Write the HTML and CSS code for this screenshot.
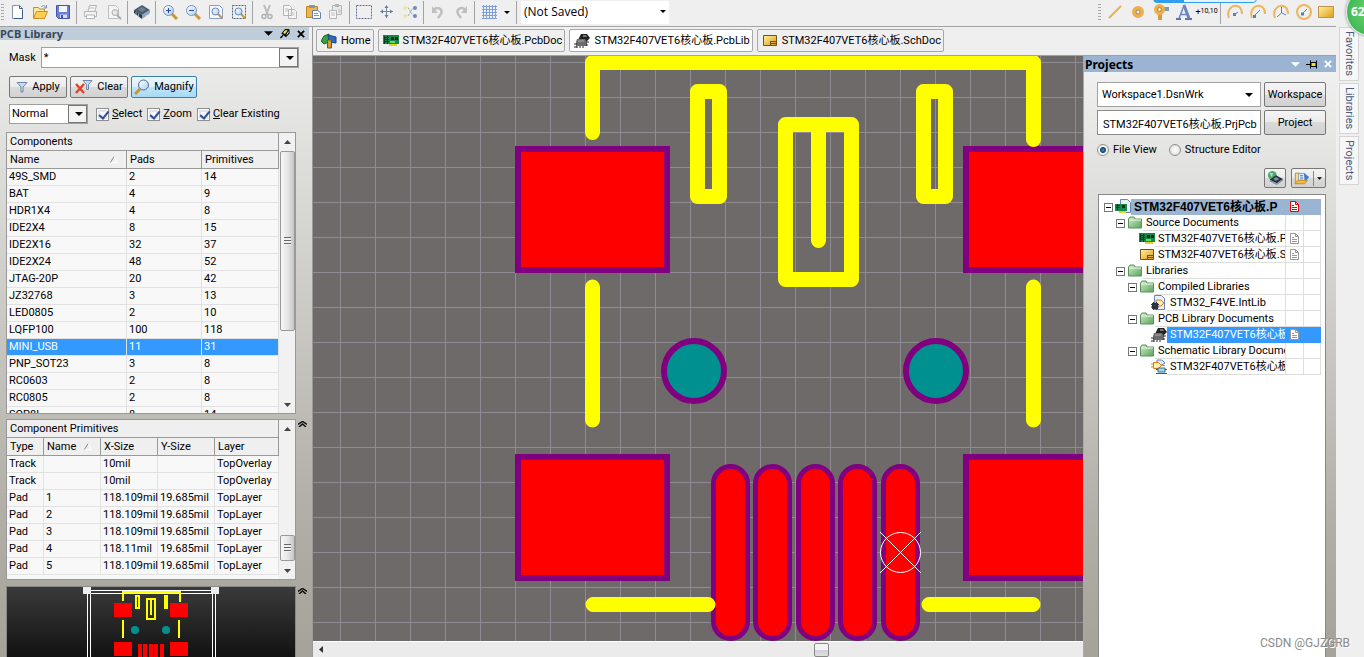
FILE: index.html
```
<!DOCTYPE html>
<html lang="zh-CN">
<head>
    <meta charset="UTF-8">
    <meta name="viewport" content="width=device-width, initial-scale=1.0">
    <title>PCB Library</title>
    <link rel="stylesheet" href="styles.css">
</head>
<body>
    <!-- shared icons -->
    <svg class="defs" width="0" height="0">
        <defs>
            <linearGradient id="gold" x1="0" y1="0" x2="1" y2="1"><stop offset="0" stop-color="#fff3a0"/><stop offset="1" stop-color="#dd9a18"/></linearGradient>
            <linearGradient id="leaf" x1="0" y1="0" x2="1" y2="1"><stop offset="0" stop-color="#d4ecc8"/><stop offset="1" stop-color="#5aa45e"/></linearGradient>
            <linearGradient id="glass" x1="0" y1="0" x2="1" y2="1"><stop offset="0" stop-color="#ffffff"/><stop offset="1" stop-color="#a9d0f2"/></linearGradient>
            <symbol id="i-new" viewBox="0 0 16 16"><path d="M3.500 1.500h7l3 3v10h-10z" fill="#fff" stroke="#8496b0"/><path d="M10.500 1.500v3h3M5 14.500h8.500V6" fill="none" stroke="#3c5a8c"/></symbol>
            <symbol id="i-open" viewBox="0 0 16 16"><path d="M1.500 14V3.500h5l1 1.500h5v3" fill="#ffe79a" stroke="#c09030"/><path d="M1.500 14.500l3-7h11l-3 7z" fill="#ffce55" stroke="#c98f25"/><path d="M9 3c2-2 4-1.500 5 .5M14.500 1v3h-3" fill="none" stroke="#7c8fb0"/></symbol>
            <symbol id="i-save" viewBox="0 0 16 16"><path d="M1.500 1.500h13v13h-11l-2-2z" fill="#6c7fdc" stroke="#4454b0"/><path d="M4 2h8v6H4z" fill="#f4f6ff"/><path d="M5 10.500h7V14H5z" fill="#d6dcf2"/><path d="M6 11h2v3H6z" fill="#4454b0"/></symbol>
            <symbol id="i-print" viewBox="0 0 16 16"><path d="M5 7l1.500-5.500h7L12 7M1.500 7.500h12v5h-12z" fill="#f2f2f2" stroke="#b5b5b5"/><path d="M3.500 11h8v3.500h-8z" fill="#fff" stroke="#b5b5b5"/><path d="M6 4h5" stroke="#c8c8c8"/></symbol>
            <symbol id="i-preview" viewBox="0 0 16 16"><path d="M2.500 1.500h7l3 3v10h-10z" fill="#f6f6f6" stroke="#bdbdbd"/><circle cx="9" cy="8.500" r="3" fill="#e6e6e6" stroke="#adadad"/><path d="M11 11l4 4" stroke="#adadad" stroke-width="2"/></symbol>
            <symbol id="i-chip" viewBox="0 0 16 16"><path d="M8 1l8 5-8 5-8-5z" fill="#4c5d72"/><path d="M0 6l8 5v4L0 9z" fill="#2a3644"/><path d="M16 6l-8 5v4l8-6z" fill="#8aa4bd"/><path d="M2 8v3M4.500 9.500v3M11.500 9.500v3M14 8v3" stroke="#9cb0c4"/><path d="M8 3l4 2.500L8 8 4 5.500z" fill="#6c8095"/></symbol>
            <symbol id="i-zoomin" viewBox="0 0 16 16"><path d="M10 10l5 5" stroke="#c99632" stroke-width="3"/><circle cx="6.500" cy="6.500" r="5" fill="url(#glass)" stroke="#7b93bd"/><path d="M4 6.500h5M6.500 4v5" stroke="#2b4a9c"/></symbol>
            <symbol id="i-zoomout" viewBox="0 0 16 16"><path d="M10 10l5 5" stroke="#c99632" stroke-width="3"/><circle cx="6.500" cy="6.500" r="5" fill="url(#glass)" stroke="#7b93bd"/><path d="M4 6.500h5" stroke="#2b4a9c"/></symbol>
            <symbol id="i-zoomdoc" viewBox="0 0 16 16"><path d="M1.500 1.500h10l3 3v10h-13z" fill="#f4f8ff" stroke="#8aa0c4"/><path d="M10 10l4 4" stroke="#c99632" stroke-width="2"/><circle cx="7.500" cy="7.500" r="3.500" fill="url(#glass)" stroke="#6a85b4"/></symbol>
            <symbol id="i-zoomsel" viewBox="0 0 16 16"><path d="M1.500 1.500h13v13h-13z" fill="none" stroke="#4e6288" stroke-dasharray="2 1"/><path d="M10 10l4 4" stroke="#c99632" stroke-width="2"/><circle cx="7.500" cy="7.500" r="3.500" fill="url(#glass)" stroke="#6a85b4"/></symbol>
            <symbol id="i-cut" viewBox="0 0 16 16"><path d="M5 1l4 10M11 1L7 11" stroke="#bcbcbc" stroke-width="2"/><circle cx="5" cy="12.500" r="2" fill="none" stroke="#b2b2b2" stroke-width="1.500"/><circle cx="11" cy="12.500" r="2" fill="none" stroke="#b2b2b2" stroke-width="1.500"/></symbol>
            <symbol id="i-copy" viewBox="0 0 16 16"><path d="M1.500 1.500h6l2 2v8h-8zM6.500 5.500h6l2 2v7h-8z" fill="#f6f6f6" stroke="#b5b5b5"/><path d="M3 5h3M3 7h3M8.500 9h4M8.500 11h4" stroke="#c0c0c0"/></symbol>
            <symbol id="i-paste" viewBox="0 0 16 16"><path d="M1.500 2.500h11v11h-11z" fill="#f0b64a" stroke="#bf8420"/><path d="M4 1h6v3H4z" fill="#8c94a4"/><path d="M7.500 6.500h5l3 2v6h-8z" fill="#fff" stroke="#6680b0"/><path d="M9 9.500h4M9 11.500h5" stroke="#7b93c4"/></symbol>
            <symbol id="i-clone" viewBox="0 0 16 16"><path d="M4.500 1.500h9v9h-9z" fill="#eaeaea" stroke="#b5b5b5"/><path d="M7 0h4v3H7z" fill="#b5b5b5"/><path d="M1.500 6.500h7v8h-7z" fill="#f6f6f6" stroke="#b5b5b5"/><path d="M3 9h4M3 11h4M10 6h3M10 8h3" stroke="#c0c0c0"/></symbol>
            <symbol id="i-marquee" viewBox="0 0 16 16"><path d="M.5 1.500h15v13H.5z" fill="none" stroke="#5d6f92" stroke-dasharray="2 1"/></symbol>
            <symbol id="i-move" viewBox="0 0 16 16"><path d="M7.500 2v12M2 7.500h12" stroke="#7388a8"/><path d="M7.500 1l2 3h-4zM7.500 14l2-3h-4zM1 7.500l3-2v4zM14 7.500l-3-2v4z" fill="#6a7f9f"/></symbol>
            <symbol id="i-cross" viewBox="0 0 16 16"><path d="M3 3.500h3l5 8h2M3 12h3l5-8h2" fill="none" stroke="#93a4c0" stroke-dasharray="2 1"/><circle cx="3" cy="4" r="2" fill="#f2e6a0"/><circle cx="3" cy="12" r="2" fill="#f2e6a0"/><circle cx="13" cy="4" r="2" fill="#6f89b8"/><circle cx="13" cy="12" r="2" fill="#6f89b8"/></symbol>
            <symbol id="i-undo" viewBox="0 0 16 16"><path d="M3 6c5-4 10-1 8 4l-3 4" fill="none" stroke="#c0c0c0" stroke-width="2.500"/><path d="M2 2v7h6z" fill="#c0c0c0"/></symbol>
            <symbol id="i-redo" viewBox="0 0 16 16"><path d="M13 6C8 2 3 5 5 10l3 4" fill="none" stroke="#c0c0c0" stroke-width="2.500"/><path d="M14 2v7H8z" fill="#c0c0c0"/></symbol>
            <symbol id="i-grid" viewBox="0 0 16 16"><path d="M2.500 1v14M5.500 1v14M8.500 1v14M11.500 1v14M14.500 1v14M1 2.500h15M1 5.500h15M1 8.500h15M1 11.500h15M1 14.500h15" stroke="#7d9fdc"/></symbol>
            <symbol id="i-line" viewBox="0 0 16 16"><path d="M2 14L14 2" stroke="#eab04c" stroke-width="2"/></symbol>
            <symbol id="i-pad" viewBox="0 0 16 16"><circle cx="8" cy="8" r="4" fill="#f0eef6" stroke="#eeb04c" stroke-width="4"/><circle cx="8" cy="8" r="2" fill="none" stroke="#a98850"/></symbol>
            <symbol id="i-via" viewBox="0 0 16 16"><path d="M8 3h8v4H8z" fill="#6f9fc0"/><path d="M5 8h4v8H5z" fill="#d59b40"/><circle cx="6.500" cy="5.500" r="3.500" fill="#f0eef6" stroke="#eeb04c" stroke-width="4"/><circle cx="6.500" cy="5.500" r="2" fill="none" stroke="#a98850"/></symbol>
            <symbol id="i-text" viewBox="0 0 16 16"><path d="M0 15h5M9 15h7" stroke="#5d75ad" stroke-width="2"/><path d="M3 14.500L8 1.500" stroke="#6d85bc" stroke-width="1.500"/><path d="M8 1l5 13.500" stroke="#6d85bc" stroke-width="3"/><path d="M5 10.500h6" stroke="#6d85bc" stroke-width="1.500"/></symbol>
            <symbol id="i-arc1" viewBox="0 0 16 16"><path d="M2 14C-1 6 5 1 10 2c4 1 5 4 5 8" fill="none" stroke="#edb55e" stroke-width="2"/><path d="M7 11l4-3" stroke="#5b7fb8"/><path d="M6 9h3v3H6z" fill="#5b7fb8"/></symbol>
            <symbol id="i-arc2" viewBox="0 0 16 16"><path d="M2 14C-1 6 5 1 10 2c4 1 5 4 5 8" fill="none" stroke="#edb55e" stroke-width="2"/><path d="M4 12l6-6" stroke="#5b7fb8"/><path d="M3 11h3v3H3z" fill="#5b7fb8"/></symbol>
            <symbol id="i-arc3" viewBox="0 0 16 16"><path d="M2 14C-1 6 5 1 10 2c4 1 5 4 5 8" fill="none" stroke="#edb55e" stroke-width="2"/><path d="M8.500 3v6L4 13M9 9l4 2" fill="none" stroke="#5b7fb8"/></symbol>
            <symbol id="i-ring" viewBox="0 0 16 16"><circle cx="8" cy="8" r="7" fill="none" stroke="#edb55e" stroke-width="2"/><path d="M6 10l5-5" stroke="#5b7fb8"/><path d="M5 8.500h3v3H5z" fill="#5b7fb8"/></symbol>
            <symbol id="i-fill" viewBox="0 0 16 16"><path d="M.5 2.500h15v11H.5z" fill="url(#gold)" stroke="#c4924c"/></symbol>
            <symbol id="i-home" viewBox="0 0 16 16"><path d="M0 8l3-5 5-2v8l-5 2z" fill="#35a045" stroke="#1d6a2a"/><path d="M7 2l8 2v6l-7-1z" fill="#2b6bc0" stroke="#174588"/><path d="M6.500 7h4v8h-4z" fill="#d69e2e" stroke="#7a5410"/></symbol>
            <symbol id="i-pcb" viewBox="0 0 16 16"><path d="M0 2h16v9H0z" fill="#16884a"/><path d="M1 4.500h5M1 6.500h5M1 8.500h5M1.500 3v8M4.500 3v8" stroke="#0b3f25"/><path d="M8 4h3v3H8zM12 4h3v3h-3z" fill="#0a2f1b"/><path d="M7 8h5v2H7z" fill="#5be06c"/><path d="M6 11h8v2H6z" fill="#e5d12a"/></symbol>
            <symbol id="i-lib" viewBox="0 0 16 16"><path d="M7 1l6 0 3 4-4 4-8-2z" fill="#222"/><path d="M9 2h3l1 2h-4z" fill="#777"/><path d="M3 6h8l2 3v4H2V9z" fill="#6c6c6c"/><path d="M3 13v2M6 13v2M9 13v2M0 11h3M0 14h3M12 9h3M12 12h2" stroke="#222"/><path d="M4 8h6" stroke="#aaa"/></symbol>
            <symbol id="i-sch" viewBox="0 0 16 16"><path d="M1.500 2.500h13v10h-13z" fill="url(#gold)" stroke="#735018"/><path d="M8 8.500h6M8 10.500h6M8.500 8v4" stroke="#735018"/></symbol>
            <symbol id="i-folder" viewBox="0 0 16 16"><path d="M1.500 13V4l1.500-2h4l1 2h6.500v9z" fill="url(#leaf)" stroke="#56935a"/><path d="M2 5h12" stroke="#eef8ea"/></symbol>
            <symbol id="i-proj" viewBox="0 0 16 16"><path d="M5.500.5h7l3 3v10h-10z" fill="#e8effc" stroke="#6884b8"/><path d="M0 5h12v7H0z" fill="#16884a"/><path d="M1 6.500h4M1 8.500h4M2.500 5v6" stroke="#0b3f25"/><path d="M7 6h3v3H7z" fill="#0a2f1b"/><path d="M4 12h7v2H4z" fill="#e5d12a"/></symbol>
            <symbol id="i-intlib" viewBox="0 0 16 16"><path d="M3.500.5h7l3 3v11h-10z" fill="#eaf0fc" stroke="#6884b8"/><path d="M5 5h5l3 3-3 3H5z" fill="#fff0b0" stroke="#dd7a1c"/><path d="M1 8h6v6H1z" fill="#2d3340"/><path d="M0 9.500h8M0 12h8M2.500 7v8M5.500 7v8" stroke="#2d3340"/></symbol>
            <symbol id="i-schlib" viewBox="0 0 16 16"><path d="M6 1h5l3 3-3 2H6z" fill="#dfeafc" stroke="#6884b8"/><path d="M2.500 3.500h5l3 3-3 3h-5zM0 5h2M0 8h2M11 6.500h3" fill="#fff0b0" stroke="#dd7a1c"/><path d="M7 9h7v4H7z" fill="#a9d6d8" stroke="#31709c"/><path d="M5 14.500h11M5 10.500h2M14 10.500h2" stroke="#2555c0"/></symbol>
            <symbol id="i-doc" viewBox="0 0 9 11"><path d="M.5.5h5l3 3v7h-8z" fill="#fff" stroke="currentColor"/><path d="M5.500.5v3h3M2 4.500h2M2 6.500h5M2 8.500h5" fill="none" stroke="currentColor"/></symbol>
            <symbol id="i-funnel" viewBox="0 0 12 12"><path d="M1 1.500h10L7 6v5H5V6z" fill="#c8dcf2" stroke="#6f88aa"/></symbol>
            <symbol id="i-clear" viewBox="0 0 18 16"><path d="M8 1.500h9l-3.500 4v5h-2v-5z" fill="#c8dcf2" stroke="#6f88aa"/><path d="M1 5l8 9M9 5l-8 9" stroke="#e0452c" stroke-width="2.500"/></symbol>
            <symbol id="i-lens" viewBox="0 0 16 16"><path d="M6 10l-5 5" stroke="#c99632" stroke-width="3"/><circle cx="9.500" cy="6" r="5" fill="url(#glass)" stroke="#52698c"/></symbol>
            <symbol id="i-panels" viewBox="0 0 18 16"><circle cx="6" cy="5" r="5" fill="#4dae6a"/><path d="M3 2l4 1-2 4z" fill="#a9d8ef"/><path d="M10 5l8 4-7 5-8-4z" fill="#26323f"/><path d="M10 7l4 2-4 2-3-2z" fill="#7b92a6"/><path d="M3 11l8 4 7-5" fill="none" stroke="#8093a4" stroke-width="1.500"/></symbol>
            <symbol id="i-export" viewBox="0 0 18 16"><path d="M1.500 14.500V2.500h5l1 1.500h4v9z" fill="#ffe08a" stroke="#c08a24"/><path d="M5 3h7v8H5z" fill="#fff" stroke="#7d92ba"/><path d="M6.500 5h4M6.500 7h4M6.500 9h4" stroke="#3f6cc4"/><path d="M11 2l6 5-4 5z" fill="#3a7be0"/><path d="M1 14.500l3-4h11l-3 4z" fill="#f2bb44" stroke="#c08a24"/></symbol>
            <symbol id="i-pin" viewBox="0 0 12 12"><path d="M1 11l3-3" stroke="#000" stroke-width="1.500"/><path d="M2 6l4-5h4l1 1v4L7 10z" fill="#111"/><path d="M6 2.500h3l-3 4-2-1z" fill="#f0e94a"/><path d="M8 7l2-3" stroke="#fff"/></symbol>
            <symbol id="i-pinside" viewBox="0 0 12 10"><path d="M0 5h4M4.500 1v8M10.500 1v8" stroke="#000"/><path d="M5 3h5v4H5z" fill="#f0e630" stroke="#000"/></symbol>
            <symbol id="i-x" viewBox="0 0 9 9"><path d="M1 1l7 7M8 1L1 8" stroke="currentColor" stroke-width="2"/></symbol>
            <symbol id="i-down" viewBox="0 0 10 5"><path d="M0 0h10L5 5z" fill="currentColor"/></symbol>
            <symbol id="i-up" viewBox="0 0 7 4"><path d="M0 4h7L3.500 0z" fill="#444"/></symbol>
            <symbol id="i-sort" viewBox="0 0 8 7"><path d="M.5 6.500L4 .5" stroke="#888" fill="none"/><path d="M4 .5l3.500 6H1" stroke="#fff" fill="none"/></symbol>
            <symbol id="i-chev" viewBox="0 0 9 6"><path d="M0 3.500l4.500-3 4.500 3M1 6l3.500-3L8 6" fill="none" stroke="#111" stroke-width="1.500"/></symbol>
        </defs>
    </svg>

    <div class="app">
        <div class="main">
            <header class="toolbar">
                <span class="grip"></span>
                <button class="tool" aria-label="New"><svg><use href="#i-new"/></svg></button>
                <button class="tool" aria-label="Open"><svg><use href="#i-open"/></svg></button>
                <button class="tool" aria-label="Save"><svg><use href="#i-save"/></svg></button>
                <span class="sep"></span>
                <button class="tool" aria-label="Print"><svg><use href="#i-print"/></svg></button>
                <button class="tool" aria-label="Preview"><svg><use href="#i-preview"/></svg></button>
                <span class="sep"></span>
                <button class="tool" aria-label="Devices"><svg><use href="#i-chip"/></svg></button>
                <span class="sep"></span>
                <button class="tool" aria-label="Zoom in"><svg><use href="#i-zoomin"/></svg></button>
                <button class="tool" aria-label="Zoom out"><svg><use href="#i-zoomout"/></svg></button>
                <button class="tool" aria-label="Fit document"><svg><use href="#i-zoomdoc"/></svg></button>
                <button class="tool" aria-label="Zoom area"><svg><use href="#i-zoomsel"/></svg></button>
                <span class="sep"></span>
                <button class="tool" aria-label="Cut"><svg><use href="#i-cut"/></svg></button>
                <button class="tool" aria-label="Copy"><svg><use href="#i-copy"/></svg></button>
                <button class="tool" aria-label="Paste"><svg><use href="#i-paste"/></svg></button>
                <button class="tool" aria-label="Rubber stamp"><svg><use href="#i-clone"/></svg></button>
                <span class="sep"></span>
                <button class="tool" aria-label="Select area"><svg><use href="#i-marquee"/></svg></button>
                <button class="tool" aria-label="Move"><svg><use href="#i-move"/></svg></button>
                <button class="tool" aria-label="Deselect"><svg><use href="#i-cross"/></svg></button>
                <span class="sep"></span>
                <button class="tool" aria-label="Undo"><svg><use href="#i-undo"/></svg></button>
                <button class="tool" aria-label="Redo"><svg><use href="#i-redo"/></svg></button>
                <span class="sep"></span>
                <button class="tool" aria-label="Grid"><svg><use href="#i-grid"/></svg></button>
                <button class="tool small" aria-label="Grid options"><svg><use href="#i-down"/></svg></button>
                <span class="sep"></span>
                <div class="combo view-combo">
                    <select aria-label="Saved view"><option>(Not Saved)</option></select>
                </div>
                <div class="place">
                    <span class="grip"></span>
                    <button class="tool" aria-label="Line"><svg><use href="#i-line"/></svg></button>
                    <button class="tool" aria-label="Pad"><svg><use href="#i-pad"/></svg></button>
                    <button class="tool" aria-label="Via"><svg><use href="#i-via"/></svg></button>
                    <button class="tool" aria-label="String"><svg><use href="#i-text"/></svg></button>
                    <button class="tool coord">+<sup>10,10</sup></button>
                    <span class="sep"></span>
                    <button class="tool" aria-label="Arc by center"><svg><use href="#i-arc1"/></svg></button>
                    <button class="tool" aria-label="Arc by edge"><svg><use href="#i-arc2"/></svg></button>
                    <button class="tool" aria-label="Arc any angle"><svg><use href="#i-arc3"/></svg></button>
                    <button class="tool" aria-label="Full circle"><svg><use href="#i-ring"/></svg></button>
                    <button class="tool" aria-label="Fill"><svg><use href="#i-fill"/></svg></button>
                </div>
            </header>

            <div class="body">
                <aside class="library">
                    <div class="panel-title">
                        <h2>PCB Library</h2>
                        <svg class="t-down"><use href="#i-down"/></svg>
                        <svg class="t-pin"><use href="#i-pin"/></svg>
                        <svg class="t-x"><use href="#i-x"/></svg>
                    </div>
                    <div class="filters">
                        <div class="mask">
                            <label for="mask">Mask</label>
                            <div class="combo boxed"><input id="mask" type="text" value="*"></div>
                        </div>
                        <div class="actions">
                            <button class="btn"><svg class="funnel"><use href="#i-funnel"/></svg>Apply</button>
                            <button class="btn"><svg class="clear"><use href="#i-clear"/></svg>Clear</button>
                            <button class="btn active"><svg><use href="#i-lens"/></svg>Magnify</button>
                        </div>
                        <div class="options">
                            <div class="combo boxed mode"><select aria-label="Mode"><option>Normal</option></select></div>
                            <label><input type="checkbox" checked><span><u>S</u>elect</span></label>
                            <label><input type="checkbox" checked><span><u>Z</u>oom</span></label>
                            <label><input type="checkbox" checked><span><u>C</u>lear Existing</span></label>
                        </div>
                    </div>

                    <div class="section">
                        <div class="listbox components">
                            <table>
                                <caption>Components</caption>
                                <thead>
                                    <tr><th class="c-name">Name<svg class="sort"><use href="#i-sort"/></svg></th><th class="c-pads">Pads</th><th>Primitives</th></tr>
                                </thead>
                                <tbody>
                                    <tr><td>49S_SMD</td><td>2</td><td>14</td></tr>
                                    <tr><td>BAT</td><td>4</td><td>9</td></tr>
                                    <tr><td>HDR1X4</td><td>4</td><td>8</td></tr>
                                    <tr><td>IDE2X4</td><td>8</td><td>15</td></tr>
                                    <tr><td>IDE2X16</td><td>32</td><td>37</td></tr>
                                    <tr><td>IDE2X24</td><td>48</td><td>52</td></tr>
                                    <tr><td>JTAG-20P</td><td>20</td><td>42</td></tr>
                                    <tr><td>JZ32768</td><td>3</td><td>13</td></tr>
                                    <tr><td>LED0805</td><td>2</td><td>10</td></tr>
                                    <tr><td>LQFP100</td><td>100</td><td>118</td></tr>
                                    <tr class="selected"><td>MINI_USB</td><td>11</td><td>31</td></tr>
                                    <tr><td>PNP_SOT23</td><td>3</td><td>8</td></tr>
                                    <tr><td>RC0603</td><td>2</td><td>8</td></tr>
                                    <tr><td>RC0805</td><td>2</td><td>8</td></tr>
                                    <tr><td>SOP8L</td><td>8</td><td>14</td></tr>
                                </tbody>
                            </table>
                            <div class="scroll">
                                <svg class="up"><use href="#i-up"/></svg>
                                <span class="thumb long"></span>
                                <svg class="down"><use href="#i-up"/></svg>
                            </div>
                        </div>
                    </div>

                    <div class="section">
                        <div class="listbox primitives">
                            <table>
                                <caption>Component Primitives</caption>
                                <thead>
                                    <tr><th class="p-type">Type</th><th class="p-size">Name<svg class="sort"><use href="#i-sort"/></svg></th><th class="p-size">X-Size</th><th class="p-size">Y-Size</th><th>Layer</th></tr>
                                </thead>
                                <tbody>
                                    <tr><td>Track</td><td></td><td>10mil</td><td></td><td>TopOverlay</td></tr>
                                    <tr><td>Track</td><td></td><td>10mil</td><td></td><td>TopOverlay</td></tr>
                                    <tr><td>Pad</td><td>1</td><td>118.109mil</td><td>19.685mil</td><td>TopLayer</td></tr>
                                    <tr><td>Pad</td><td>2</td><td>118.109mil</td><td>19.685mil</td><td>TopLayer</td></tr>
                                    <tr><td>Pad</td><td>3</td><td>118.109mil</td><td>19.685mil</td><td>TopLayer</td></tr>
                                    <tr><td>Pad</td><td>4</td><td>118.11mil</td><td>19.685mil</td><td>TopLayer</td></tr>
                                    <tr><td>Pad</td><td>5</td><td>118.109mil</td><td>19.685mil</td><td>TopLayer</td></tr>
                                </tbody>
                            </table>
                            <div class="scroll low">
                                <svg class="up"><use href="#i-up"/></svg>
                                <span class="thumb"></span>
                                <svg class="down"><use href="#i-up"/></svg>
                            </div>
                        </div>
                        <svg class="chev"><use href="#i-chev"/></svg>
                    </div>

                    <div class="section grow">
                        <svg class="preview">
                            <g fill="none" stroke="#ffff00" stroke-width="2">
                                <path d="M116 14V5h57v10M116 33v18M172 33v18M129 9h3v12h-3zM158 9h2v12h-2zM140 12h8v20h-8zM144 12v16"/>
                            </g>
                            <path fill="#ff0000" d="M107 16h18v14h-18zM163 16h18v14h-18zM107 55h18v14h-18zM163 55h18v14h-18zM131 57h4v16h-4zM136 57h4v16h-4zM142 57h4v16h-4zM147 57h4v16h-4zM153 57h4v16h-4z"/>
                            <circle cx="128" cy="43" r="4" fill="#009090"/>
                            <circle cx="159" cy="43" r="4" fill="#009090"/>
                            <path d="M80.500 74V3.500h128V74M83.500 74V6.500h122V74" fill="none" stroke="#fff"/>
                            <path d="M76 0h8v7h-8zM204 0h8v7h-8z" fill="#eee"/>
                        </svg>
                        <svg class="chev"><use href="#i-chev"/></svg>
                    </div>
                </aside>

                <div class="center">
                    <nav class="tabs">
                        <button class="tab"><svg><use href="#i-home"/></svg>Home</button>
                        <button class="tab"><svg><use href="#i-pcb"/></svg>STM32F407VET6核心板.PcbDoc</button>
                        <button class="tab current"><svg><use href="#i-lib"/></svg>STM32F407VET6核心板.PcbLib</button>
                        <button class="tab"><svg><use href="#i-sch"/></svg>STM32F407VET6核心板.SchDoc</button>
                    </nav>
                    <div class="work">
                        <main class="editor">
                            <svg class="board">
                                <defs>
                                    <pattern id="mesh" x="27" y="6" width="35" height="35" patternUnits="userSpaceOnUse">
                                        <path d="M.5 0v35M0 .5h35" stroke="#8f8b93"/>
                                    </pattern>
                                </defs>
                                <rect width="100%" height="100%" fill="#6e6a69"/>
                                <rect width="100%" height="100%" fill="url(#mesh)"/>
                                <!-- mounting pads, holes and pins -->
                                <g fill="#ff0000" stroke="#800080" stroke-width="6">
                                    <rect x="205" y="93" width="149" height="121"/>
                                    <rect x="653" y="93" width="149" height="121"/>
                                    <rect x="205" y="401" width="149" height="121"/>
                                    <rect x="653" y="401" width="149" height="121"/>
                                </g>
                                <g fill="#009090" stroke="#800080" stroke-width="6">
                                    <circle cx="381" cy="315" r="30"/>
                                    <circle cx="623" cy="315" r="30"/>
                                </g>
                                <g fill="#ff0000" stroke="#800080" stroke-width="5">
                                    <rect x="400.500" y="410.500" width="34" height="172" rx="17"/>
                                    <rect x="442.500" y="410.500" width="34" height="172" rx="17"/>
                                    <rect x="485.500" y="410.500" width="34" height="172" rx="17"/>
                                    <rect x="527.500" y="410.500" width="34" height="172" rx="17"/>
                                    <rect x="570.500" y="410.500" width="34" height="172" rx="17"/>
                                </g>
                                <!-- top overlay -->
                                <g fill="none" stroke="#ffff00" stroke-width="15" stroke-linecap="round" stroke-linejoin="round">
                                    <path d="M279.500 76.500V6.500h441v77"/>
                                    <path d="M384.500 35.500h22v105h-22zM610.500 35.500h22v105h-22z"/>
                                    <path d="M472.500 68.500h66v155h-66zM505.500 68.500v116"/>
                                    <path d="M279.500 231v133M720.500 231v133"/>
                                    <path d="M280 548.500h115M616 548.500h104"/>
                                </g>
                                <!-- origin marker -->
                                <g fill="none" stroke="#fff">
                                    <circle cx="587.500" cy="496.500" r="20"/>
                                    <path d="M567 476l41 41M608 476l-41 41"/>
                                </g>
                            </svg>
                            <div class="hscroll">
                                <svg class="left"><path d="M5 0v7L1 3.500z" fill="#333"/></svg>
                                <span class="hthumb"></span>
                            </div>
                        </main>

                        <aside class="projects">
                            <div class="panel-title">
                                <h2>Projects</h2>
                                <svg class="t-down"><use href="#i-down"/></svg>
                                <svg class="t-pin"><use href="#i-pinside"/></svg>
                                <svg class="t-x"><use href="#i-x"/></svg>
                            </div>
                            <div class="project-body">
                                <div class="pick">
                                    <div class="combo"><select aria-label="Workspace file"><option>Workspace1.DsnWrk</option></select></div>
                                    <button class="btn">Workspace</button>
                                </div>
                                <div class="pick">
                                    <input type="text" aria-label="Project file" value="STM32F407VET6核心板.PrjPcb">
                                    <button class="btn">Project</button>
                                </div>
                                <div class="views">
                                    <label><input type="radio" name="view" checked>File View</label>
                                    <label><input type="radio" name="view">Structure Editor</label>
                                </div>
                                <div class="tree-tools">
                                    <button class="btn" aria-label="Panels"><svg><use href="#i-panels"/></svg></button>
                                    <button class="btn" aria-label="Export"><svg><use href="#i-export"/></svg><i></i><svg class="caret"><use href="#i-down"/></svg></button>
                                </div>
                                <ul class="tree">
                                    <li class="d0 root"><i class="toggle"></i><svg class="ico"><use href="#i-proj"/></svg><span class="name">STM32F407VET6核心板.P</span><span class="cell"><svg><use href="#i-doc"/></svg></span><span class="cell"></span></li>
                                    <li class="d1"><i class="toggle"></i><svg class="ico"><use href="#i-folder"/></svg><span class="name">Source Documents</span><span class="cell"></span><span class="cell"></span></li>
                                    <li class="d2"><i></i><svg class="ico"><use href="#i-pcb"/></svg><span class="name">STM32F407VET6核心板.PcbDoc</span><span class="cell"><svg><use href="#i-doc"/></svg></span><span class="cell"></span></li>
                                    <li class="d2"><i></i><svg class="ico"><use href="#i-sch"/></svg><span class="name">STM32F407VET6核心板.SchDoc</span><span class="cell"><svg><use href="#i-doc"/></svg></span><span class="cell"></span></li>
                                    <li class="d1"><i class="toggle"></i><svg class="ico"><use href="#i-folder"/></svg><span class="name">Libraries</span><span class="cell"></span><span class="cell"></span></li>
                                    <li class="d2"><i class="toggle"></i><svg class="ico"><use href="#i-folder"/></svg><span class="name">Compiled Libraries</span><span class="cell"></span><span class="cell"></span></li>
                                    <li class="d3"><i></i><svg class="ico"><use href="#i-intlib"/></svg><span class="name">STM32_F4VE.IntLib</span><span class="cell"></span><span class="cell"></span></li>
                                    <li class="d2"><i class="toggle"></i><svg class="ico"><use href="#i-folder"/></svg><span class="name">PCB Library Documents</span><span class="cell"></span><span class="cell"></span></li>
                                    <li class="d3 selected"><i></i><svg class="ico"><use href="#i-lib"/></svg><span class="name">STM32F407VET6核心板.PcbLib</span><span class="cell"><svg><use href="#i-doc"/></svg></span><span class="cell"></span></li>
                                    <li class="d2"><i class="toggle"></i><svg class="ico"><use href="#i-folder"/></svg><span class="name">Schematic Library Documents</span><span class="cell"></span><span class="cell"></span></li>
                                    <li class="d3"><i></i><svg class="ico"><use href="#i-schlib"/></svg><span class="name">STM32F407VET6核心板.SchLib</span><span class="cell"></span><span class="cell"></span></li>
                                </ul>
                            </div>
                        </aside>
                    </div>
                </div>
            </div>
        </div>

        <nav class="rail">
            <button>Favorites</button>
            <button>Libraries</button>
            <button>Projects</button>
        </nav>
    </div>

    <div class="progress"></div>
    <div class="ball">62</div>
    <div class="watermark">CSDN @GJZGRB</div>
</body>
</html>
```
FILE: styles.css
```
* {
    box-sizing: border-box;
    margin: 0;
    padding: 0;
}

body {
    height: 100vh;
    overflow: hidden;
    background: #efefef;
    color: #000;
    font-family: Roboto, "Noto Sans CJK SC", sans-serif;
    font-size: 11px;
    line-height: 16px;
    position: relative;
}

button, input, select {
    font: inherit;
    color: inherit;
}

svg {
    flex: none;
    display: block;
}

.defs {
    position: absolute;
}

.app {
    display: flex;
    height: 100%;
}

.main {
    flex: 1;
    min-width: 0;
    display: flex;
    flex-direction: column;
}

/* toolbar */
.toolbar {
    display: flex;
    align-items: center;
    height: 27px;
    padding-bottom: 2px;
    border-bottom: 1px solid #a3a3a3;
}

.grip {
    width: 3px;
    height: 17px;
    margin: 0 1px;
    background: repeating-linear-gradient(#a8a8a8 0 1px, #efefef 1px 3px);
}

.tool {
    display: flex;
    align-items: center;
    justify-content: center;
    width: 23px;
    height: 23px;
    border: none;
    background: none;
}

.tool svg {
    width: 16px;
    height: 16px;
}

.tool.small {
    width: 14px;
}

.tool.small svg {
    width: 6px;
    height: 3px;
}

.coord {
    font-size: 9px;
    white-space: nowrap;
}

.coord sup {
    font-size: 7px;
    line-height: 12px;
    align-self: flex-start;
    margin-top: 4px;
}

.sep {
    width: 1px;
    height: 23px;
    margin: 0 2px;
    background: #a3a3a3;
}

.place {
    display: flex;
    align-items: center;
    margin-left: auto;
}

.place .grip {
    margin-right: 2px;
}

.place .tool:last-child {
    width: 21px;
}

/* combo boxes */
.combo {
    position: relative;
    display: flex;
}

.combo select,
.combo input {
    appearance: none;
    width: 100%;
    border: 1px solid #a0a0a0;
    border-radius: 0;
    background: #fff;
    outline: none;
}

.combo::after {
    content: "";
    position: absolute;
    right: 8px;
    top: 50%;
    margin-top: -2px;
    border: 4px solid transparent;
    border-top-color: #000;
    border-bottom: none;
    pointer-events: none;
}

.combo.boxed::before {
    content: "";
    position: absolute;
    right: 1px;
    top: 1px;
    bottom: 1px;
    width: 17px;
    border: 1px solid #777;
    background: #f3f3f3;
    pointer-events: none;
}

.combo.boxed::after {
    right: 5px;
}

.view-combo {
    width: 148px;
    height: 23px;
    margin-left: 2px;
    font-family: "Open Sans", "Noto Sans", sans-serif;
    font-size: 12px;
}

.view-combo select {
    border: none;
    padding-left: 3px;
}

.view-combo::after {
    right: 3px;
    border-width: 3px;
    border-bottom: none;
}

.body {
    flex: 1;
    min-height: 0;
    display: flex;
}

/* panels */
.panel-title {
    display: flex;
    align-items: center;
    gap: 6px;
}

.panel-title h2 {
    flex: 1;
    font-family: "Noto Sans", "Open Sans", sans-serif;
    font-size: 11px;
    line-height: 13px;
    font-weight: bold;
}

.t-down {
    width: 9px;
    height: 5px;
}

.t-pin {
    width: 12px;
    height: 11px;
}

.t-x {
    width: 8px;
    height: 8px;
}

.library {
    width: 313px;
    flex: none;
    display: flex;
    flex-direction: column;
    padding-left: 6px;
    background: linear-gradient(#f0f0f0, #e3e3e1 15%, #b2b0a8 75%, #a5a299);
    border-right: 1px solid #999;
}

.library .panel-title {
    margin-left: -6px;
    margin-right: 3px;
    padding-right: 4px;
    height: 13px;
    background: #bfcddb;
    color: #000;
}

.library .panel-title h2 {
    color: #3c4858;
}

.filters {
    display: flex;
    flex-direction: column;
    gap: 6px;
    padding: 7px 13px 8px 3px;
}

.mask {
    display: flex;
    align-items: center;
    gap: 5px;
    margin-bottom: 2px;
}

.mask .combo {
    flex: 1;
    height: 21px;
}

.mask input {
    padding: 0 20px 0 2px;
}

.actions {
    display: flex;
    gap: 3px;
}

.btn {
    display: flex;
    align-items: center;
    justify-content: center;
    gap: 4px;
    height: 22px;
    border: 1px solid #777;
    border-radius: 2px;
    background: linear-gradient(#f4f4f4, #ebebeb 50%, #dadada 50%, #d2d2d2);
    white-space: nowrap;
}

.actions .btn {
    width: 58px;
}

.actions .active {
    width: 66px;
    border-color: #3c7fb1;
    background: linear-gradient(#eaf6fd, #d9f0fc 50%, #bee6fd 50%, #a7d9f5);
}

.btn svg {
    width: 16px;
    height: 16px;
}

.btn .funnel {
    width: 12px;
    height: 12px;
}

.btn .clear {
    width: 18px;
}

.options {
    display: flex;
    align-items: center;
    gap: 5px;
    white-space: nowrap;
}

.mode {
    width: 79px;
    height: 20px;
    margin-right: 3px;
}

.mode select {
    padding-left: 2px;
}

.options label {
    display: flex;
    align-items: center;
    gap: 3px;
}

input[type="checkbox"] {
    appearance: none;
    position: relative;
    width: 13px;
    height: 13px;
    border: 1px solid #8e8f8f;
    background: #f6f8fb;
    box-shadow: inset 0 0 0 1px #fff, inset 0 0 0 3px #dfe5ee;
}

input[type="checkbox"]:checked::after {
    content: "";
    position: absolute;
    left: 4px;
    top: 0;
    width: 4px;
    height: 8px;
    border: solid #344c96;
    border-width: 0 2px 2px 0;
    transform: rotate(40deg);
}

/* lists */
.section {
    display: flex;
    gap: 2px;
    margin-bottom: 5px;
}

.grow {
    flex: 1;
    min-height: 0;
    margin: 1px 0 0;
}

.listbox {
    display: flex;
    width: 290px;
    border: 1px solid #999;
    background: #f8f8f8;
    overflow: hidden;
}

.components {
    height: 282px;
}

.primitives {
    height: 161px;
}

.listbox table {
    width: 272px;
    flex: none;
    align-self: flex-start;
    table-layout: fixed;
    border-collapse: separate;
    border-spacing: 0;
}

caption, th {
    height: 18px;
    line-height: 17px;
    padding-left: 3px;
    text-align: left;
    font-weight: normal;
    white-space: nowrap;
    background: #efefef;
    border-bottom: 1px solid #999;
    border-right: 1px solid #999;
}

th .sort {
    float: right;
    width: 8px;
    height: 7px;
    margin: 5px 8px 0 0;
}

td {
    height: 17px;
    line-height: 16px;
    padding-left: 2px;
    border-bottom: 1px solid #e2e2e2;
    border-right: 1px solid #e2e2e2;
    white-space: nowrap;
}

.selected td {
    background: #3399ff;
    color: #fff;
}

.c-name {
    width: 120px;
}

.c-pads {
    width: 75px;
}

.p-type {
    width: 37px;
}

.p-size {
    width: 57px;
}

.scroll {
    flex: 1;
    display: flex;
    flex-direction: column;
    align-items: center;
    padding: 7px 0 6px;
    background: #f1f1f1;
}

.scroll svg {
    width: 7px;
    height: 4px;
}

.scroll .down {
    margin-top: auto;
    transform: rotate(180deg);
}

.thumb {
    width: 15px;
    height: 26px;
    border: 1px solid #999;
    border-radius: 2px;
    background:
        repeating-linear-gradient(#666 0 1px, #f0f0f0 1px 3px) center / 7px 8px no-repeat,
        linear-gradient(90deg, #f6f6f6, #e6e6e6 50%, #c6c6c6);
}

.long {
    height: 180px;
    margin-top: 7px;
}

.low .thumb {
    margin-top: auto;
}

.low .down {
    margin-top: 8px;
}

.chev {
    width: 9px;
    height: 6px;
    margin-top: 2px;
}

.preview {
    width: 290px;
    height: 100%;
    border: 1px solid #888;
    border-bottom: none;
    background: linear-gradient(#3a3a3a, #121212);
}

/* document area */
.center {
    flex: 1;
    min-width: 0;
    display: flex;
    flex-direction: column;
}

.tabs {
    display: flex;
    gap: 4px;
    height: 29px;
    padding: 2px 3px 3px;
    border-bottom: 1px solid #a3a3a3;
}

.tab {
    display: flex;
    align-items: center;
    gap: 4px;
    height: 23px;
    padding: 0 2px 0 4px;
    border: 1px solid #a8a8a8;
    border-radius: 2px;
    background: #efefef;
    white-space: nowrap;
}

.tab svg {
    width: 16px;
    height: 16px;
}

.current {
    background: #fff;
}

.work {
    flex: 1;
    min-height: 0;
    display: flex;
}

.editor {
    flex: 1;
    min-width: 0;
    display: flex;
    flex-direction: column;
    border-right: 1px solid #aaa;
}

.board {
    flex: 1;
    width: 100%;
    min-height: 0;
}

.hscroll {
    display: flex;
    align-items: center;
    height: 16px;
    padding-left: 5px;
    border-top: 1px solid #fff;
    background: #ebebeb;
}

.left {
    width: 6px;
    height: 7px;
}

.hthumb {
    width: 15px;
    height: 14px;
    margin-left: 64%;
    border: 1px solid #888;
    border-radius: 2px;
    background: linear-gradient(#f3f3f3 50%, #cfd0d4 50%, #e0e0e0);
}

/* projects */
.projects {
    width: 252px;
    flex: none;
    display: flex;
    flex-direction: column;
}

.projects .panel-title {
    height: 16px;
    padding: 0 4px 0 1px;
    background: #9ab4d1;
    color: #fff;
}

.projects .panel-title h2 {
    color: #000;
    font-size: 12px;
}

.project-body {
    flex: 1;
    min-height: 0;
    display: flex;
    flex-direction: column;
    padding: 10px 10px 0 13px;
    background: linear-gradient(#f0f0f0, #e3e3e1 15%, #b2b0a8 75%, #a5a299);
}

.pick {
    display: flex;
    gap: 3px;
    margin-bottom: 3px;
}

.pick .combo,
.pick > input {
    flex: 1;
    min-width: 0;
    height: 25px;
}

.pick > input {
    padding-left: 5px;
    border: 1px solid #8c8c8c;
    background: #fff;
}

.pick select {
    padding-left: 4px;
}

.pick .btn {
    width: 62px;
    height: 25px;
}

.views {
    display: flex;
    gap: 12px;
    margin-top: 4px;
}

.views label {
    display: flex;
    align-items: center;
    gap: 4px;
}

input[type="radio"] {
    appearance: none;
    width: 12px;
    height: 12px;
    border: 1px solid #8e8f8f;
    border-radius: 50%;
    background: radial-gradient(#fff, #d8d8d8);
}

input[type="radio"]:checked {
    background: radial-gradient(#3fa0d0, #123f66 35%, #f2f2f2 50%);
}

.tree-tools {
    display: flex;
    justify-content: flex-end;
    gap: 5px;
    margin: 10px 0 6px;
}

.tree-tools .btn {
    height: 20px;
    padding: 0 2px;
    gap: 3px;
}

.tree-tools i {
    width: 1px;
    height: 15px;
    background: #888;
}

.tree-tools .caret {
    width: 5px;
    height: 3px;
    margin-right: 1px;
}

.tree {
    flex: 1;
    min-height: 0;
    margin-left: 1px;
    padding: 4px 4px 0 5px;
    border: 1px solid #888;
    border-bottom: none;
    background: #fff;
    list-style: none;
}

.tree li {
    display: flex;
    align-items: center;
    height: 16px;
}

.tree i {
    flex: none;
    width: 9px;
    height: 9px;
    margin-right: 2px;
}

.toggle {
    border: 1px solid #777;
    background: linear-gradient(#000, #000) center / 5px 1px no-repeat;
}

.ico {
    width: 16px;
    height: 16px;
}

.name {
    flex: 1;
    min-width: 0;
    height: 16px;
    padding-left: 3px;
    overflow: hidden;
    white-space: nowrap;
    border-bottom: 1px solid #dedede;
}

.cell {
    flex: none;
    display: flex;
    align-items: center;
    width: 18px;
    height: 16px;
    padding-left: 4px;
    color: #999;
    border-left: 1px solid #dedede;
    border-bottom: 1px solid #dedede;
}

.cell:last-child {
    border-right: 1px solid #dedede;
}

.cell svg {
    width: 9px;
    height: 11px;
}

.d1 {
    padding-left: 12px;
}

.d2 {
    padding-left: 24px;
}

.d3 {
    padding-left: 36px;
}

.root .name {
    font-family: "Liberation Sans", "Noto Sans CJK SC", sans-serif;
    font-size: 12px;
    font-weight: bold;
}

.root .name,
.root .cell {
    background: #9ab4d1;
    border-color: #9ab4d1;
}

.root .cell {
    color: #e00;
}

.tree .selected .name,
.tree .selected .cell {
    background: #3399ff;
    border-color: #3399ff;
    color: #fff;
}

.tree .selected .cell {
    color: #999;
}

/* side rail */
.rail {
    display: flex;
    flex-direction: column;
    gap: 2px;
    width: 28px;
    padding: 27px 5px 0 3px;
}

.rail button {
    writing-mode: vertical-rl;
    width: 20px;
    padding: 3px 0 4px;
    border: 1px solid #d5d5d5;
    background: #f7f7f7;
    color: #4a5a80;
    line-height: 18px;
}

/* floating widgets */
.progress {
    position: absolute;
    top: -8px;
    right: 107px;
    width: 104px;
    height: 11px;
    border: 1px solid #2f9df0;
    border-radius: 4px;
    background: linear-gradient(90deg, #2f9df0 30px, #e4f3fd 30px);
}

.ball {
    position: absolute;
    top: -12px;
    right: -30px;
    width: 48px;
    height: 48px;
    padding-left: 4px;
    border: 1px solid #e8e8e8;
    border-radius: 50%;
    background: radial-gradient(#6cd46f, #2fae4a);
    box-shadow: 0 0 3px #777;
    color: #fff;
    font-family: "Noto Sans", sans-serif;
    font-size: 12px;
    font-weight: bold;
    line-height: 46px;
}

.watermark {
    position: absolute;
    right: 14px;
    bottom: 6px;
    color: #8a8a8a;
    font-size: 12px;
    text-shadow: 1px 1px 0 #fff;
}
```
